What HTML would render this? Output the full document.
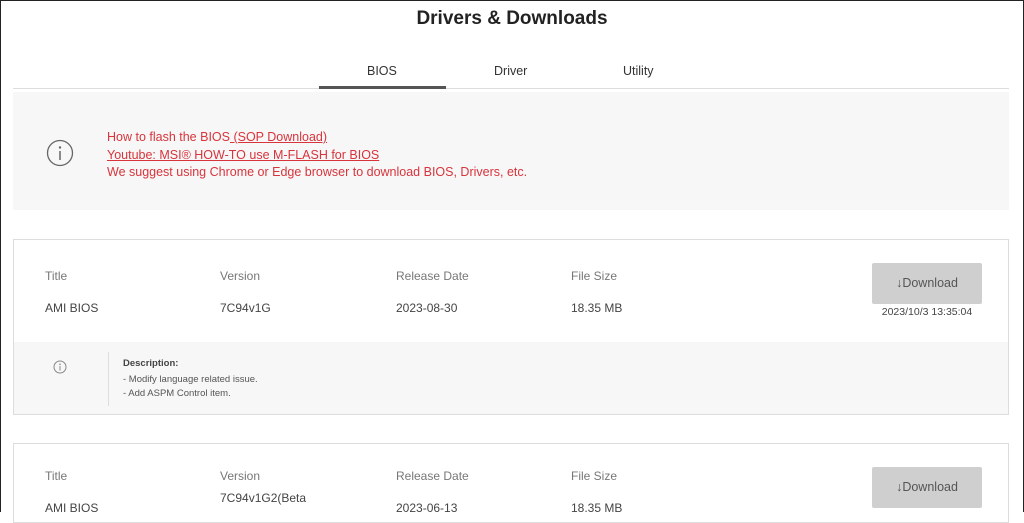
<!DOCTYPE html>
<html><head><meta charset="utf-8"><style>
*{margin:0;padding:0;box-sizing:border-box}
body{width:1024px;height:512px;overflow:hidden;background:#fff;font-family:"Liberation Sans",sans-serif;position:relative}
.frame{position:absolute;left:0;top:0;width:1024px;height:512px;border:1px solid #222;border-bottom:none;pointer-events:none}
.a{position:absolute;white-space:nowrap}
h1{position:absolute;left:0;width:1024px;text-align:center;top:8px;font-size:19px;font-weight:bold;color:#222}
.tab{font-size:12.5px;color:#333;top:64px}
.red{color:#d8343c;font-size:12.5px}
.card{position:absolute;left:13px;width:996px;border:1px solid #ddd;background:#fff}
.lbl{font-size:12px;color:#777}
.val{font-size:12px;color:#444}
.btn{position:absolute;left:858px;width:110px;height:41px;background:#cfcfcf;color:#555;font-size:12.5px;text-align:center;line-height:41px;border-radius:2px}
</style></head><body>
<h1>Drivers &amp; Downloads</h1>
<div class="a tab" style="left:367px">BIOS</div>
<div class="a tab" style="left:494px">Driver</div>
<div class="a tab" style="left:623px">Utility</div>
<div class="a" style="left:13px;top:88px;width:996px;height:1px;background:#ddd"></div>
<div class="a" style="left:319px;top:86px;width:127px;height:3px;background:#555"></div>
<div class="a" style="left:13px;top:92px;width:996px;height:118px;background:#f7f7f7"></div>
<svg class="a" style="left:46px;top:139px" width="28" height="28"><circle cx="14" cy="14" r="12.5" fill="none" stroke="#666" stroke-width="1.3"/><circle cx="14" cy="8.5" r="1.2" fill="#666"/><line x1="14" y1="12" x2="14" y2="21" stroke="#666" stroke-width="1.5"/></svg>
<div class="a red" style="left:107px;top:130px">How to flash the BIOS<u> (SOP Download)</u></div>
<div class="a red" style="left:107px;top:148px"><u>Youtube: MSI® HOW-TO use M-FLASH for BIOS</u></div>
<div class="a red" style="left:107px;top:165px">We suggest using Chrome or Edge browser to download BIOS, Drivers, etc.</div>

<div class="card" style="top:239px;height:176px">
<div class="a lbl" style="left:31px;top:29px">Title</div>
<div class="a lbl" style="left:206px;top:29px">Version</div>
<div class="a lbl" style="left:382px;top:29px">Release Date</div>
<div class="a lbl" style="left:557px;top:29px">File Size</div>
<div class="a val" style="left:31px;top:61px">AMI BIOS</div>
<div class="a val" style="left:206px;top:61px">7C94v1G</div>
<div class="a val" style="left:382px;top:61px">2023-08-30</div>
<div class="a val" style="left:557px;top:61px">18.35 MB</div>
<div class="btn" style="top:23px">↓Download</div>
<div class="a" style="left:858px;width:110px;text-align:center;top:66px;font-size:10.5px;color:#444">2023/10/3 13:35:04</div>
<div class="a" style="left:0;top:102px;width:994px;height:72px;background:#f7f7f7"></div>
<svg class="a" style="left:39px;top:120px" width="14" height="14"><circle cx="7" cy="7" r="6" fill="none" stroke="#888" stroke-width="1"/><circle cx="7" cy="4.3" r=".8" fill="#888"/><line x1="7" y1="6" x2="7" y2="10.5" stroke="#888"/></svg>
<div class="a" style="left:94px;top:112px;width:1px;height:54px;background:#ddd"></div>
<div class="a" style="left:109px;top:118px;font-size:9.5px;font-weight:bold;color:#444">Description:</div>
<div class="a" style="left:109px;top:134px;font-size:9.5px;color:#555">- Modify language related issue.</div>
<div class="a" style="left:109px;top:148px;font-size:9.5px;color:#555">- Add ASPM Control item.</div>
</div>

<div class="card" style="top:443px;height:80px">
<div class="a lbl" style="left:31px;top:25px">Title</div>
<div class="a lbl" style="left:206px;top:25px">Version</div>
<div class="a lbl" style="left:382px;top:25px">Release Date</div>
<div class="a lbl" style="left:557px;top:25px">File Size</div>
<div class="a val" style="left:31px;top:57px">AMI BIOS</div>
<div class="a val" style="left:206px;top:47px">7C94v1G2(Beta</div>
<div class="a val" style="left:382px;top:57px">2023-06-13</div>
<div class="a val" style="left:557px;top:57px">18.35 MB</div>
<div class="btn" style="top:23px">↓Download</div>
</div>
<div class="frame"></div>
</body></html>
